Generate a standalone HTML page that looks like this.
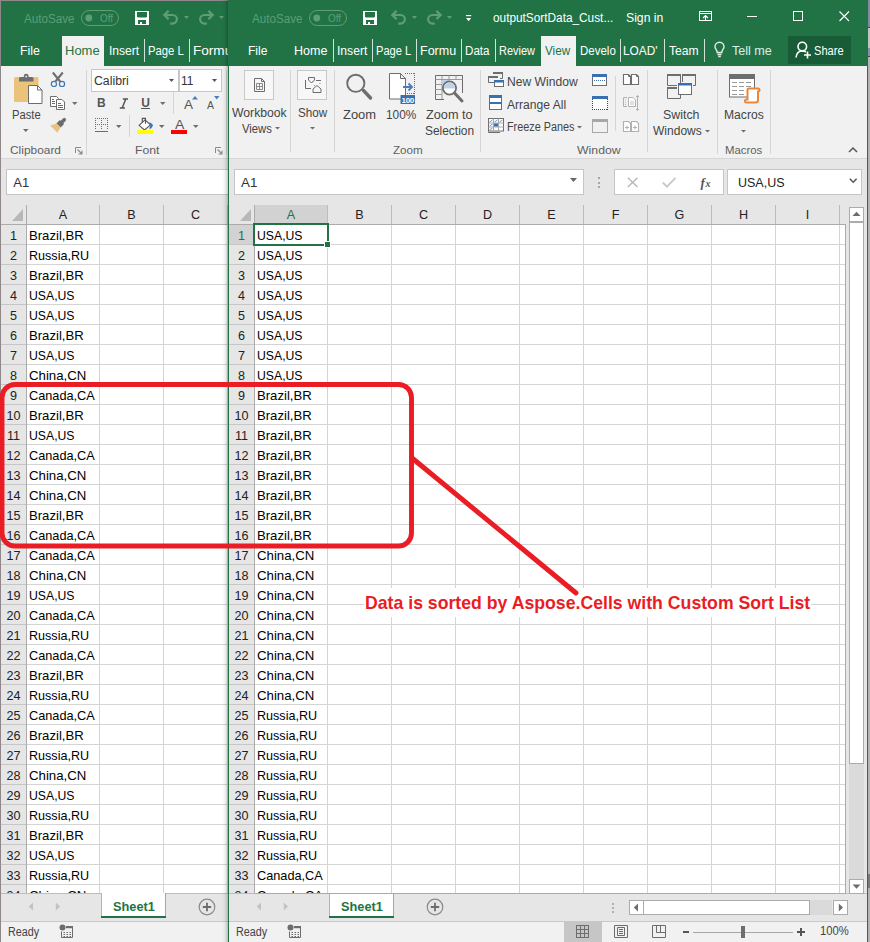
<!DOCTYPE html>
<html><head><meta charset="utf-8"><style>
html,body{margin:0;padding:0;}
body{width:870px;height:942px;overflow:hidden;position:relative;background:#fff;font-family:"Liberation Sans",sans-serif;}
div{position:absolute;}
.t{line-height:1;white-space:nowrap;}
svg{position:absolute;overflow:visible;}
</style></head><body>
<div id="lw" style="left:0;top:0;width:228px;height:942px;overflow:hidden;background:#f1f1f1">
<div style="left:0px;top:0px;width:228px;height:66px;background:#217346;"></div>
<div style="left:62px;top:36px;width:42px;height:30px;background:#f1f1f1;"></div>
<div class="t" style="left:24.00px;top:12.00px;font-size:12px;color:#5f9d74;font-weight:normal;line-height:14px;transform:scaleX(0.9690);transform-origin:0 0;">AutoSave</div>
<div style="left:81px;top:10px;width:38px;height:16px;background:transparent;box-sizing:border-box;border:1.3px solid #5f9d74;border-radius:8px;"></div>
<svg style="left:85px;top:14px" width="8" height="8"><circle cx="3.8" cy="4" r="3.4" fill="#5f9d74"/></svg>
<div class="t" style="left:99.57px;top:12.00px;font-size:11.5px;color:#5f9d74;font-weight:normal;line-height:12px;transform:scaleX(0.8562);transform-origin:0 0;">Off</div>
<svg style="left:135px;top:11px" width="14" height="14"><rect x="0" y="0" width="14" height="14" fill="#fff"/><path d="M2 1 H12 V5.8 L11 6.6 H3 L2 5.8 Z" fill="#217346"/><rect x="3" y="9" width="8" height="4" fill="#217346"/><rect x="5" y="11" width="2" height="2" fill="#fff"/></svg>
<svg style="left:163px;top:10px" width="16" height="16"><path d="M5.6 0.9 L1.3 5 L5.6 9.1 M1.3 5 H9.6 A4.3 4.3 0 0 1 9.6 13.6 H7.2" fill="none" stroke="#5f9d74" stroke-width="2.2"/></svg>
<svg style="left:184px;top:16px" width="6" height="4"><path d="M0 0 H5 L2.5 3 Z" fill="#5f9d74"/></svg>
<svg style="left:198px;top:10px" width="16" height="16"><g transform="translate(16,0) scale(-1,1)"><path d="M5.6 0.9 L1.3 5 L5.6 9.1 M1.3 5 H9.6 A4.3 4.3 0 0 1 9.6 13.6 H7.2" fill="none" stroke="#5f9d74" stroke-width="2.2"/></g></svg>
<svg style="left:219px;top:16px" width="6" height="4"><path d="M0 0 H5 L2.5 3 Z" fill="#5f9d74"/></svg>
<div class="t" style="left:19.97px;top:44.00px;font-size:12px;color:#fff;font-weight:normal;line-height:14px;transform:scaleX(1.0335);transform-origin:0 0;">File</div>
<div class="t" style="left:64.92px;top:44.00px;font-size:12px;color:#217346;font-weight:normal;line-height:14px;transform:scaleX(1.0820);transform-origin:0 0;">Home</div>
<div class="t" style="left:108.59px;top:44.00px;font-size:12px;color:#fff;font-weight:normal;line-height:14px;transform:scaleX(1.0069);transform-origin:0 0;">Insert</div>
<div style="left:144px;top:39px;width:1px;height:23px;background:rgba(255,255,255,0.8);"></div>
<div class="t" style="left:148.06px;top:44.00px;font-size:12px;color:#fff;font-weight:normal;line-height:14px;transform:scaleX(0.9401);transform-origin:0 0;">Page L</div>
<div style="left:189px;top:39px;width:1px;height:23px;background:rgba(255,255,255,0.8);"></div>
<div class="t" style="left:192.87px;top:44.00px;font-size:12px;color:#fff;font-weight:normal;line-height:14px;transform:scaleX(1.1317);transform-origin:0 0;">Formulas</div>
<div style="left:0px;top:66px;width:228px;height:92px;background:#f1f1f1;"></div>
<div style="left:0px;top:158px;width:228px;height:1px;background:#d6d6d6;"></div>
<svg style="left:13px;top:73px" width="32" height="32"><rect x="1" y="4" width="24.5" height="25" rx="1.5" fill="#ebc27a"/><path d="M6 8.5 V5.5 Q6 4 7.5 4 H10.8 V3.2 A2.4 2.4 0 0 1 15.6 3.2 V4 H19 Q20.5 4 20.5 5.5 V8.5 Z" fill="#6d6d6d"/><circle cx="13.2" cy="3.6" r="0.9" fill="#f1f1f1"/><path d="M15.5 12.5 H24.5 L29 17 V30.5 H15.5 Z" fill="#fff" stroke="#6d6d6d" stroke-width="1"/><path d="M24.5 12.5 V17 H29" fill="none" stroke="#6d6d6d" stroke-width="1"/></svg>
<div class="t" style="left:11.87px;top:108.00px;font-size:12px;color:#444;font-weight:normal;line-height:14px;transform:scaleX(0.9349);transform-origin:0 0;">Paste</div>
<svg style="left:23px;top:129px" width="6.5" height="4"><path d="M0 0 H5.5 L2.75 3 Z" fill="#6d6d6d"/></svg>
<svg style="left:50px;top:72px" width="16" height="16"><path d="M2.8 0.5 L10.2 9.5 M12.8 0.5 L5.4 9.5" stroke="#6d6d6d" stroke-width="2" fill="none"/><circle cx="3.9" cy="11.9" r="2.6" fill="#f1f1f1" stroke="#3f77bb" stroke-width="1.2"/><circle cx="12" cy="11.9" r="2.6" fill="#f1f1f1" stroke="#3f77bb" stroke-width="1.2"/></svg>
<svg style="left:50px;top:96px" width="16" height="15"><path d="M0.5 0.5 H6.5 L8.5 2.5 V10.5 H0.5 Z" fill="#fff" stroke="#6d6d6d" stroke-width="1"/><path d="M2 3.5 H4 M2 5.5 H5 M2 7.5 H5" stroke="#3f77bb" stroke-width="1"/><path d="M6.5 3.5 H12 L14.5 6 V13.5 H6.5 Z" fill="#fff" stroke="#6d6d6d" stroke-width="1"/><path d="M8 7.5 H11 M8 9.5 H13 M8 11.5 H13" stroke="#3f77bb" stroke-width="1"/></svg>
<svg style="left:72px;top:102px" width="6.5" height="4"><path d="M0 0 H5.5 L2.75 3 Z" fill="#6d6d6d"/></svg>
<svg style="left:50px;top:118px" width="17" height="16"><path d="M14.3 1.7 L12 4" stroke="#6d6d6d" stroke-width="3.6" stroke-linecap="round"/><path d="M9.9 1.9 L14.1 6.1 L10.6 9.6 L6.4 5.4 Z" fill="#6d6d6d"/><path d="M6.4 5.4 L10.6 9.6 L7.4 14.7 L0.2 7.6 Z" fill="#ebc27a"/></svg>
<div class="t" style="left:10.18px;top:144.00px;font-size:11.5px;color:#5f5f5f;font-weight:normal;line-height:12px;transform:scaleX(1.0355);transform-origin:0 0;">Clipboard</div>
<svg style="left:75px;top:147px" width="8" height="8"><path d="M0.5 6 V0.5 H6" fill="none" stroke="#8a8a8a" stroke-width="1"/><path d="M2.5 2.5 L6.5 6.5 M7 3.5 V7 H3.5" fill="none" stroke="#8a8a8a" stroke-width="1.1"/></svg>
<div style="left:86px;top:70px;width:1px;height:85px;background:#d5d5d5;"></div>
<div style="left:91px;top:69px;width:88px;height:23px;background:#fff;box-sizing:border-box;border:1px solid #c6c6c6;"></div>
<div class="t" style="left:93.91px;top:74.00px;font-size:12.5px;color:#333;font-weight:normal;line-height:14px;transform:scaleX(0.9823);transform-origin:0 0;">Calibri</div>
<svg style="left:169px;top:79px" width="6" height="4"><path d="M0 0 H5 L2.5 3 Z" fill="#555"/></svg>
<div style="left:179px;top:69px;width:43px;height:23px;background:#fff;box-sizing:border-box;border:1px solid #c6c6c6;"></div>
<div class="t" style="left:180.84px;top:74.00px;font-size:12.5px;color:#333;font-weight:normal;line-height:14px;transform:scaleX(0.9565);transform-origin:0 0;">11</div>
<svg style="left:212px;top:79px" width="6" height="4"><path d="M0 0 H5 L2.5 3 Z" fill="#555"/></svg>
<div class="t" style="left:97.00px;top:96.00px;font-size:12px;color:#555;font-weight:bold;line-height:14px;">B</div>
<svg style="left:119px;top:97.6px" width="10" height="11"><path d="M3.8 1 H9 M0.8 10 H6 M6.8 1 L3.2 10" fill="none" stroke="#555" stroke-width="1.5"/></svg>
<div class="t" style="left:141.30px;top:96.00px;font-size:12px;color:#555;font-weight:bold;line-height:14px;">U</div>
<div style="left:141px;top:108px;width:9px;height:1.2px;background:#555;"></div>
<svg style="left:159.6px;top:102px" width="6.5" height="4"><path d="M0 0 H5.5 L2.75 3 Z" fill="#6d6d6d"/></svg>
<div style="left:173px;top:92px;width:1px;height:22px;background:#d5d5d5;"></div>
<div class="t" style="left:184.00px;top:97.00px;font-size:13.5px;color:#555;font-weight:normal;line-height:15px;">A</div>
<svg style="left:191.5px;top:95.5px" width="7" height="4"><path d="M0 3.5 H6 L3 0 Z" fill="#4a7ebb"/></svg>
<div class="t" style="left:207.00px;top:99.00px;font-size:10.5px;color:#555;font-weight:normal;line-height:12px;">A</div>
<svg style="left:214px;top:95.8px" width="6" height="4"><path d="M0 0 H5.5 L2.75 3.5 Z" fill="#4a7ebb"/></svg>
<svg style="left:95px;top:118px" width="14" height="15"><path d="M0 0.5 H13 M0 6.5 H13 M0.5 0 V12 M6.5 0 V12 M12.5 0 V12" stroke="#6d6d6d" stroke-width="1" stroke-dasharray="1 1" fill="none"/><path d="M0 13.5 H13" stroke="#6d6d6d" stroke-width="1"/></svg>
<svg style="left:115.7px;top:125px" width="6.5" height="4"><path d="M0 0 H5.5 L2.75 3 Z" fill="#6d6d6d"/></svg>
<div style="left:129px;top:115px;width:1px;height:22px;background:#d5d5d5;"></div>
<svg style="left:137px;top:117px" width="17" height="18"><path d="M2.1 8.3 L8 2.9 L13.6 7.8 L7.5 13 Z" fill="#fff" stroke="#555" stroke-width="1.1"/><path d="M5.3 5.5 V1.4 H8.5 V6.7" fill="none" stroke="#555" stroke-width="1.1"/><path d="M12 5.5 Q16.5 6.5 15.8 9 Q15 11 12.5 12.5 Q13.5 9 12 5.5 Z" fill="#3f77bb"/><rect x="0" y="13" width="16" height="4" fill="#ffff00"/></svg>
<svg style="left:158.8px;top:125px" width="6.5" height="4"><path d="M0 0 H5.5 L2.75 3 Z" fill="#6d6d6d"/></svg>
<div class="t" style="left:175.00px;top:118.00px;font-size:12.5px;color:#555;font-weight:normal;line-height:14px;transform:scaleX(1.1205);transform-origin:0 0;">A</div>
<div style="left:171px;top:130px;width:16px;height:4px;background:#ff0000;"></div>
<svg style="left:192.6px;top:125px" width="6.5" height="4"><path d="M0 0 H5.5 L2.75 3 Z" fill="#6d6d6d"/></svg>
<div class="t" style="left:135.34px;top:144.00px;font-size:11.5px;color:#5f5f5f;font-weight:normal;line-height:12px;transform:scaleX(1.0636);transform-origin:0 0;">Font</div>
<svg style="left:215px;top:147px" width="8" height="8"><path d="M0.5 6 V0.5 H6" fill="none" stroke="#8a8a8a" stroke-width="1"/><path d="M2.5 2.5 L6.5 6.5 M7 3.5 V7 H3.5" fill="none" stroke="#8a8a8a" stroke-width="1.1"/></svg>
<div style="left:226px;top:70px;width:1px;height:85px;background:#d5d5d5;"></div>
<div style="left:0px;top:159px;width:228px;height:66px;background:#e6e6e6;"></div>
<div style="left:6px;top:169px;width:230px;height:26px;background:#fff;box-sizing:border-box;border:1px solid #c6c6c6;"></div>
<div class="t" style="left:13.30px;top:175.00px;font-size:13px;color:#333;font-weight:normal;line-height:15px;transform:scaleX(1.0000);transform-origin:0 0;">A1</div>
<div style="left:1px;top:205px;width:228px;height:19px;background:#e6e6e6;"></div>
<svg style="left:12px;top:209px" width="12" height="12"><path d="M11 0 L11 12 L0 12 Z" fill="#b8b8b8"/></svg>
<div style="left:1px;top:225px;width:25px;height:668px;background:#e6e6e6;"></div>
<div style="left:27px;top:225px;width:213px;height:668px;background:#fff;"></div>
<div style="left:1px;top:224px;width:239px;height:1px;background:#ababab;"></div>
<div style="left:26px;top:205px;width:1px;height:688px;background:#ababab;"></div>
<div style="left:1px;top:244px;width:25px;height:1px;background:#c6c6c6;"></div>
<div style="left:27px;top:244px;width:213px;height:1px;background:#d4d4d4;"></div>
<div class="t" style="left:-1.50px;top:229.00px;font-size:12.6px;color:#222;font-weight:normal;line-height:14px;width:30px;text-align:center;">1</div>
<div class="t" style="left:28.69px;top:228.00px;font-size:13px;color:#000;font-weight:normal;line-height:15px;transform:scaleX(1.0095);transform-origin:0 0;">Brazil,BR</div>
<div style="left:1px;top:264px;width:25px;height:1px;background:#c6c6c6;"></div>
<div style="left:27px;top:264px;width:213px;height:1px;background:#d4d4d4;"></div>
<div class="t" style="left:-1.50px;top:249.00px;font-size:12.6px;color:#222;font-weight:normal;line-height:14px;width:30px;text-align:center;">2</div>
<div class="t" style="left:28.74px;top:248.00px;font-size:13px;color:#000;font-weight:normal;line-height:15px;transform:scaleX(0.9667);transform-origin:0 0;">Russia,RU</div>
<div style="left:1px;top:284px;width:25px;height:1px;background:#c6c6c6;"></div>
<div style="left:27px;top:284px;width:213px;height:1px;background:#d4d4d4;"></div>
<div class="t" style="left:-1.50px;top:269.00px;font-size:12.6px;color:#222;font-weight:normal;line-height:14px;width:30px;text-align:center;">3</div>
<div class="t" style="left:28.69px;top:268.00px;font-size:13px;color:#000;font-weight:normal;line-height:15px;transform:scaleX(1.0095);transform-origin:0 0;">Brazil,BR</div>
<div style="left:1px;top:304px;width:25px;height:1px;background:#c6c6c6;"></div>
<div style="left:27px;top:304px;width:213px;height:1px;background:#d4d4d4;"></div>
<div class="t" style="left:-1.50px;top:289.00px;font-size:12.6px;color:#222;font-weight:normal;line-height:14px;width:30px;text-align:center;">4</div>
<div class="t" style="left:28.86px;top:288.00px;font-size:13px;color:#000;font-weight:normal;line-height:15px;transform:scaleX(0.9402);transform-origin:0 0;">USA,US</div>
<div style="left:1px;top:324px;width:25px;height:1px;background:#c6c6c6;"></div>
<div style="left:27px;top:324px;width:213px;height:1px;background:#d4d4d4;"></div>
<div class="t" style="left:-1.50px;top:309.00px;font-size:12.6px;color:#222;font-weight:normal;line-height:14px;width:30px;text-align:center;">5</div>
<div class="t" style="left:28.86px;top:308.00px;font-size:13px;color:#000;font-weight:normal;line-height:15px;transform:scaleX(0.9402);transform-origin:0 0;">USA,US</div>
<div style="left:1px;top:344px;width:25px;height:1px;background:#c6c6c6;"></div>
<div style="left:27px;top:344px;width:213px;height:1px;background:#d4d4d4;"></div>
<div class="t" style="left:-1.50px;top:329.00px;font-size:12.6px;color:#222;font-weight:normal;line-height:14px;width:30px;text-align:center;">6</div>
<div class="t" style="left:28.69px;top:328.00px;font-size:13px;color:#000;font-weight:normal;line-height:15px;transform:scaleX(1.0095);transform-origin:0 0;">Brazil,BR</div>
<div style="left:1px;top:364px;width:25px;height:1px;background:#c6c6c6;"></div>
<div style="left:27px;top:364px;width:213px;height:1px;background:#d4d4d4;"></div>
<div class="t" style="left:-1.50px;top:349.00px;font-size:12.6px;color:#222;font-weight:normal;line-height:14px;width:30px;text-align:center;">7</div>
<div class="t" style="left:28.86px;top:348.00px;font-size:13px;color:#000;font-weight:normal;line-height:15px;transform:scaleX(0.9402);transform-origin:0 0;">USA,US</div>
<div style="left:1px;top:384px;width:25px;height:1px;background:#c6c6c6;"></div>
<div style="left:27px;top:384px;width:213px;height:1px;background:#d4d4d4;"></div>
<div class="t" style="left:-1.50px;top:369.00px;font-size:12.6px;color:#222;font-weight:normal;line-height:14px;width:30px;text-align:center;">8</div>
<div class="t" style="left:29.09px;top:368.00px;font-size:13px;color:#000;font-weight:normal;line-height:15px;transform:scaleX(1.0183);transform-origin:0 0;">China,CN</div>
<div style="left:1px;top:404px;width:25px;height:1px;background:#c6c6c6;"></div>
<div style="left:27px;top:404px;width:213px;height:1px;background:#d4d4d4;"></div>
<div class="t" style="left:-1.50px;top:389.00px;font-size:12.6px;color:#222;font-weight:normal;line-height:14px;width:30px;text-align:center;">9</div>
<div class="t" style="left:29.11px;top:388.00px;font-size:13px;color:#000;font-weight:normal;line-height:15px;transform:scaleX(0.9789);transform-origin:0 0;">Canada,CA</div>
<div style="left:1px;top:424px;width:25px;height:1px;background:#c6c6c6;"></div>
<div style="left:27px;top:424px;width:213px;height:1px;background:#d4d4d4;"></div>
<div class="t" style="left:-1.50px;top:409.00px;font-size:12.6px;color:#222;font-weight:normal;line-height:14px;width:30px;text-align:center;">10</div>
<div class="t" style="left:28.69px;top:408.00px;font-size:13px;color:#000;font-weight:normal;line-height:15px;transform:scaleX(1.0095);transform-origin:0 0;">Brazil,BR</div>
<div style="left:1px;top:444px;width:25px;height:1px;background:#c6c6c6;"></div>
<div style="left:27px;top:444px;width:213px;height:1px;background:#d4d4d4;"></div>
<div class="t" style="left:-1.50px;top:429.00px;font-size:12.6px;color:#222;font-weight:normal;line-height:14px;width:30px;text-align:center;">11</div>
<div class="t" style="left:28.86px;top:428.00px;font-size:13px;color:#000;font-weight:normal;line-height:15px;transform:scaleX(0.9402);transform-origin:0 0;">USA,US</div>
<div style="left:1px;top:464px;width:25px;height:1px;background:#c6c6c6;"></div>
<div style="left:27px;top:464px;width:213px;height:1px;background:#d4d4d4;"></div>
<div class="t" style="left:-1.50px;top:449.00px;font-size:12.6px;color:#222;font-weight:normal;line-height:14px;width:30px;text-align:center;">12</div>
<div class="t" style="left:29.11px;top:448.00px;font-size:13px;color:#000;font-weight:normal;line-height:15px;transform:scaleX(0.9789);transform-origin:0 0;">Canada,CA</div>
<div style="left:1px;top:484px;width:25px;height:1px;background:#c6c6c6;"></div>
<div style="left:27px;top:484px;width:213px;height:1px;background:#d4d4d4;"></div>
<div class="t" style="left:-1.50px;top:469.00px;font-size:12.6px;color:#222;font-weight:normal;line-height:14px;width:30px;text-align:center;">13</div>
<div class="t" style="left:29.09px;top:468.00px;font-size:13px;color:#000;font-weight:normal;line-height:15px;transform:scaleX(1.0183);transform-origin:0 0;">China,CN</div>
<div style="left:1px;top:504px;width:25px;height:1px;background:#c6c6c6;"></div>
<div style="left:27px;top:504px;width:213px;height:1px;background:#d4d4d4;"></div>
<div class="t" style="left:-1.50px;top:489.00px;font-size:12.6px;color:#222;font-weight:normal;line-height:14px;width:30px;text-align:center;">14</div>
<div class="t" style="left:29.09px;top:488.00px;font-size:13px;color:#000;font-weight:normal;line-height:15px;transform:scaleX(1.0183);transform-origin:0 0;">China,CN</div>
<div style="left:1px;top:524px;width:25px;height:1px;background:#c6c6c6;"></div>
<div style="left:27px;top:524px;width:213px;height:1px;background:#d4d4d4;"></div>
<div class="t" style="left:-1.50px;top:509.00px;font-size:12.6px;color:#222;font-weight:normal;line-height:14px;width:30px;text-align:center;">15</div>
<div class="t" style="left:28.69px;top:508.00px;font-size:13px;color:#000;font-weight:normal;line-height:15px;transform:scaleX(1.0095);transform-origin:0 0;">Brazil,BR</div>
<div style="left:1px;top:544px;width:25px;height:1px;background:#c6c6c6;"></div>
<div style="left:27px;top:544px;width:213px;height:1px;background:#d4d4d4;"></div>
<div class="t" style="left:-1.50px;top:529.00px;font-size:12.6px;color:#222;font-weight:normal;line-height:14px;width:30px;text-align:center;">16</div>
<div class="t" style="left:29.11px;top:528.00px;font-size:13px;color:#000;font-weight:normal;line-height:15px;transform:scaleX(0.9789);transform-origin:0 0;">Canada,CA</div>
<div style="left:1px;top:564px;width:25px;height:1px;background:#c6c6c6;"></div>
<div style="left:27px;top:564px;width:213px;height:1px;background:#d4d4d4;"></div>
<div class="t" style="left:-1.50px;top:549.00px;font-size:12.6px;color:#222;font-weight:normal;line-height:14px;width:30px;text-align:center;">17</div>
<div class="t" style="left:29.11px;top:548.00px;font-size:13px;color:#000;font-weight:normal;line-height:15px;transform:scaleX(0.9789);transform-origin:0 0;">Canada,CA</div>
<div style="left:1px;top:584px;width:25px;height:1px;background:#c6c6c6;"></div>
<div style="left:27px;top:584px;width:213px;height:1px;background:#d4d4d4;"></div>
<div class="t" style="left:-1.50px;top:569.00px;font-size:12.6px;color:#222;font-weight:normal;line-height:14px;width:30px;text-align:center;">18</div>
<div class="t" style="left:29.09px;top:568.00px;font-size:13px;color:#000;font-weight:normal;line-height:15px;transform:scaleX(1.0183);transform-origin:0 0;">China,CN</div>
<div style="left:1px;top:604px;width:25px;height:1px;background:#c6c6c6;"></div>
<div style="left:27px;top:604px;width:213px;height:1px;background:#d4d4d4;"></div>
<div class="t" style="left:-1.50px;top:589.00px;font-size:12.6px;color:#222;font-weight:normal;line-height:14px;width:30px;text-align:center;">19</div>
<div class="t" style="left:28.86px;top:588.00px;font-size:13px;color:#000;font-weight:normal;line-height:15px;transform:scaleX(0.9402);transform-origin:0 0;">USA,US</div>
<div style="left:1px;top:624px;width:25px;height:1px;background:#c6c6c6;"></div>
<div style="left:27px;top:624px;width:213px;height:1px;background:#d4d4d4;"></div>
<div class="t" style="left:-1.50px;top:609.00px;font-size:12.6px;color:#222;font-weight:normal;line-height:14px;width:30px;text-align:center;">20</div>
<div class="t" style="left:29.11px;top:608.00px;font-size:13px;color:#000;font-weight:normal;line-height:15px;transform:scaleX(0.9789);transform-origin:0 0;">Canada,CA</div>
<div style="left:1px;top:644px;width:25px;height:1px;background:#c6c6c6;"></div>
<div style="left:27px;top:644px;width:213px;height:1px;background:#d4d4d4;"></div>
<div class="t" style="left:-1.50px;top:629.00px;font-size:12.6px;color:#222;font-weight:normal;line-height:14px;width:30px;text-align:center;">21</div>
<div class="t" style="left:28.74px;top:628.00px;font-size:13px;color:#000;font-weight:normal;line-height:15px;transform:scaleX(0.9667);transform-origin:0 0;">Russia,RU</div>
<div style="left:1px;top:664px;width:25px;height:1px;background:#c6c6c6;"></div>
<div style="left:27px;top:664px;width:213px;height:1px;background:#d4d4d4;"></div>
<div class="t" style="left:-1.50px;top:649.00px;font-size:12.6px;color:#222;font-weight:normal;line-height:14px;width:30px;text-align:center;">22</div>
<div class="t" style="left:29.11px;top:648.00px;font-size:13px;color:#000;font-weight:normal;line-height:15px;transform:scaleX(0.9789);transform-origin:0 0;">Canada,CA</div>
<div style="left:1px;top:684px;width:25px;height:1px;background:#c6c6c6;"></div>
<div style="left:27px;top:684px;width:213px;height:1px;background:#d4d4d4;"></div>
<div class="t" style="left:-1.50px;top:669.00px;font-size:12.6px;color:#222;font-weight:normal;line-height:14px;width:30px;text-align:center;">23</div>
<div class="t" style="left:28.69px;top:668.00px;font-size:13px;color:#000;font-weight:normal;line-height:15px;transform:scaleX(1.0095);transform-origin:0 0;">Brazil,BR</div>
<div style="left:1px;top:704px;width:25px;height:1px;background:#c6c6c6;"></div>
<div style="left:27px;top:704px;width:213px;height:1px;background:#d4d4d4;"></div>
<div class="t" style="left:-1.50px;top:689.00px;font-size:12.6px;color:#222;font-weight:normal;line-height:14px;width:30px;text-align:center;">24</div>
<div class="t" style="left:28.74px;top:688.00px;font-size:13px;color:#000;font-weight:normal;line-height:15px;transform:scaleX(0.9667);transform-origin:0 0;">Russia,RU</div>
<div style="left:1px;top:724px;width:25px;height:1px;background:#c6c6c6;"></div>
<div style="left:27px;top:724px;width:213px;height:1px;background:#d4d4d4;"></div>
<div class="t" style="left:-1.50px;top:709.00px;font-size:12.6px;color:#222;font-weight:normal;line-height:14px;width:30px;text-align:center;">25</div>
<div class="t" style="left:29.11px;top:708.00px;font-size:13px;color:#000;font-weight:normal;line-height:15px;transform:scaleX(0.9789);transform-origin:0 0;">Canada,CA</div>
<div style="left:1px;top:744px;width:25px;height:1px;background:#c6c6c6;"></div>
<div style="left:27px;top:744px;width:213px;height:1px;background:#d4d4d4;"></div>
<div class="t" style="left:-1.50px;top:729.00px;font-size:12.6px;color:#222;font-weight:normal;line-height:14px;width:30px;text-align:center;">26</div>
<div class="t" style="left:28.69px;top:728.00px;font-size:13px;color:#000;font-weight:normal;line-height:15px;transform:scaleX(1.0095);transform-origin:0 0;">Brazil,BR</div>
<div style="left:1px;top:764px;width:25px;height:1px;background:#c6c6c6;"></div>
<div style="left:27px;top:764px;width:213px;height:1px;background:#d4d4d4;"></div>
<div class="t" style="left:-1.50px;top:749.00px;font-size:12.6px;color:#222;font-weight:normal;line-height:14px;width:30px;text-align:center;">27</div>
<div class="t" style="left:28.74px;top:748.00px;font-size:13px;color:#000;font-weight:normal;line-height:15px;transform:scaleX(0.9667);transform-origin:0 0;">Russia,RU</div>
<div style="left:1px;top:784px;width:25px;height:1px;background:#c6c6c6;"></div>
<div style="left:27px;top:784px;width:213px;height:1px;background:#d4d4d4;"></div>
<div class="t" style="left:-1.50px;top:769.00px;font-size:12.6px;color:#222;font-weight:normal;line-height:14px;width:30px;text-align:center;">28</div>
<div class="t" style="left:29.09px;top:768.00px;font-size:13px;color:#000;font-weight:normal;line-height:15px;transform:scaleX(1.0183);transform-origin:0 0;">China,CN</div>
<div style="left:1px;top:804px;width:25px;height:1px;background:#c6c6c6;"></div>
<div style="left:27px;top:804px;width:213px;height:1px;background:#d4d4d4;"></div>
<div class="t" style="left:-1.50px;top:789.00px;font-size:12.6px;color:#222;font-weight:normal;line-height:14px;width:30px;text-align:center;">29</div>
<div class="t" style="left:28.86px;top:788.00px;font-size:13px;color:#000;font-weight:normal;line-height:15px;transform:scaleX(0.9402);transform-origin:0 0;">USA,US</div>
<div style="left:1px;top:824px;width:25px;height:1px;background:#c6c6c6;"></div>
<div style="left:27px;top:824px;width:213px;height:1px;background:#d4d4d4;"></div>
<div class="t" style="left:-1.50px;top:809.00px;font-size:12.6px;color:#222;font-weight:normal;line-height:14px;width:30px;text-align:center;">30</div>
<div class="t" style="left:28.74px;top:808.00px;font-size:13px;color:#000;font-weight:normal;line-height:15px;transform:scaleX(0.9667);transform-origin:0 0;">Russia,RU</div>
<div style="left:1px;top:844px;width:25px;height:1px;background:#c6c6c6;"></div>
<div style="left:27px;top:844px;width:213px;height:1px;background:#d4d4d4;"></div>
<div class="t" style="left:-1.50px;top:829.00px;font-size:12.6px;color:#222;font-weight:normal;line-height:14px;width:30px;text-align:center;">31</div>
<div class="t" style="left:28.69px;top:828.00px;font-size:13px;color:#000;font-weight:normal;line-height:15px;transform:scaleX(1.0095);transform-origin:0 0;">Brazil,BR</div>
<div style="left:1px;top:864px;width:25px;height:1px;background:#c6c6c6;"></div>
<div style="left:27px;top:864px;width:213px;height:1px;background:#d4d4d4;"></div>
<div class="t" style="left:-1.50px;top:849.00px;font-size:12.6px;color:#222;font-weight:normal;line-height:14px;width:30px;text-align:center;">32</div>
<div class="t" style="left:28.86px;top:848.00px;font-size:13px;color:#000;font-weight:normal;line-height:15px;transform:scaleX(0.9402);transform-origin:0 0;">USA,US</div>
<div style="left:1px;top:884px;width:25px;height:1px;background:#c6c6c6;"></div>
<div style="left:27px;top:884px;width:213px;height:1px;background:#d4d4d4;"></div>
<div class="t" style="left:-1.50px;top:869.00px;font-size:12.6px;color:#222;font-weight:normal;line-height:14px;width:30px;text-align:center;">33</div>
<div class="t" style="left:28.74px;top:868.00px;font-size:13px;color:#000;font-weight:normal;line-height:15px;transform:scaleX(0.9667);transform-origin:0 0;">Russia,RU</div>
<div class="t" style="left:-1.50px;top:889.00px;font-size:12.6px;color:#222;font-weight:normal;line-height:14px;width:30px;text-align:center;">34</div>
<div class="t" style="left:29.09px;top:888.00px;font-size:13px;color:#000;font-weight:normal;line-height:15px;transform:scaleX(1.0183);transform-origin:0 0;">China,CN</div>
<div style="left:99px;top:205px;width:1px;height:19px;background:#bcbcbc;"></div>
<div style="left:99px;top:225px;width:1px;height:668px;background:#d4d4d4;"></div>
<div class="t" style="left:43.00px;top:208.00px;font-size:12.6px;color:#222;font-weight:normal;line-height:14px;width:40px;text-align:center;">A</div>
<div style="left:163px;top:205px;width:1px;height:19px;background:#bcbcbc;"></div>
<div style="left:163px;top:225px;width:1px;height:668px;background:#d4d4d4;"></div>
<div class="t" style="left:111.50px;top:208.00px;font-size:12.6px;color:#222;font-weight:normal;line-height:14px;width:40px;text-align:center;">B</div>
<div style="left:227px;top:205px;width:1px;height:19px;background:#bcbcbc;"></div>
<div style="left:227px;top:225px;width:1px;height:668px;background:#d4d4d4;"></div>
<div class="t" style="left:175.50px;top:208.00px;font-size:12.6px;color:#222;font-weight:normal;line-height:14px;width:40px;text-align:center;">C</div>
<div style="left:0px;top:893px;width:700px;height:28px;background:#e6e6e6;"></div>
<div style="left:0px;top:893px;width:700px;height:1px;background:#bdbdbd;"></div>
<div style="left:0px;top:921px;width:700px;height:1px;background:#c8c8c8;"></div>
<div style="left:0px;top:922px;width:700px;height:20px;background:#f1f1f1;"></div>
<svg style="left:28px;top:902px" width="6" height="9"><path d="M5 0.5 V8.5 L0.8 4.5 Z" fill="#c2c2c2"/></svg>
<svg style="left:55px;top:902px" width="6" height="9"><path d="M0.8 0.5 V8.5 L5 4.5 Z" fill="#c2c2c2"/></svg>
<div style="left:101px;top:893px;width:65px;height:25px;background:#fff;box-sizing:border-box;border-left:1px solid #b4b4b4;border-right:1px solid #a6a6a6;"></div>
<div style="left:101px;top:916px;width:65px;height:2px;background:#217346;"></div>
<div class="t" style="left:112.59px;top:900.00px;font-size:12.5px;color:#217346;font-weight:bold;line-height:14px;transform:scaleX(1.0199);transform-origin:0 0;">Sheet1</div>
<svg style="left:198px;top:898px" width="18" height="18"><circle cx="9" cy="9" r="7.8" fill="none" stroke="#8a8a8a" stroke-width="1.2"/><path d="M9 4.8 V13.2 M4.8 9 H13.2" stroke="#6d6d6d" stroke-width="1.8"/></svg>
<div class="t" style="left:7.60px;top:925.00px;font-size:12px;color:#444;font-weight:normal;line-height:14px;transform:scaleX(0.8991);transform-origin:0 0;">Ready</div>
<svg style="left:59px;top:924px" width="15" height="15"><circle cx="3.5" cy="3.5" r="3" fill="#6d6d6d"/><path d="M7 2.5 H13.5 V13.5 H2.5 V7.5" fill="none" stroke="#6d6d6d" stroke-width="1"/><rect x="7" y="2" width="7" height="2.2" fill="#6d6d6d"/><path d="M4.5 8.5 H6 M7.5 8.5 H9 M10.5 8.5 H12 M4.5 10.5 H6 M7.5 10.5 H9 M10.5 10.5 H12 M4.5 12.5 H6 M7.5 12.5 H9 M10.5 12.5 H12" stroke="#6d6d6d" stroke-width="1"/></svg>
<div style="left:0px;top:0px;width:1px;height:942px;background:#8f878a;"></div>
<div style="left:0px;top:0px;width:228px;height:1px;background:#8f878a;"></div>
</div>
<div style="left:222px;top:0;width:6px;height:942px;background:linear-gradient(to right,rgba(0,0,0,0),rgba(0,0,0,0.05) 50%,rgba(0,0,0,0.22));"></div>
<div id="rw" style="left:228px;top:0;width:642px;height:942px;overflow:hidden;background:#f1f1f1">
<div style="left:0px;top:0px;width:642px;height:66px;background:#217346;"></div>
<div style="left:313px;top:36px;width:35px;height:30px;background:#f1f1f1;"></div>
<div class="t" style="left:24.00px;top:12.00px;font-size:12px;color:#5f9d74;font-weight:normal;line-height:14px;transform:scaleX(0.9690);transform-origin:0 0;">AutoSave</div>
<div style="left:81px;top:10px;width:38px;height:16px;background:transparent;box-sizing:border-box;border:1.3px solid #5f9d74;border-radius:8px;"></div>
<svg style="left:85px;top:14px" width="8" height="8"><circle cx="3.8" cy="4" r="3.4" fill="#5f9d74"/></svg>
<div class="t" style="left:99.57px;top:12.00px;font-size:11.5px;color:#5f9d74;font-weight:normal;line-height:12px;transform:scaleX(0.8562);transform-origin:0 0;">Off</div>
<svg style="left:135px;top:11px" width="14" height="14"><rect x="0" y="0" width="14" height="14" fill="#fff"/><path d="M2 1 H12 V5.8 L11 6.6 H3 L2 5.8 Z" fill="#217346"/><rect x="3" y="9" width="8" height="4" fill="#217346"/><rect x="5" y="11" width="2" height="2" fill="#fff"/></svg>
<svg style="left:163px;top:10px" width="16" height="16"><path d="M5.6 0.9 L1.3 5 L5.6 9.1 M1.3 5 H9.6 A4.3 4.3 0 0 1 9.6 13.6 H7.2" fill="none" stroke="#5f9d74" stroke-width="2.2"/></svg>
<svg style="left:184px;top:16px" width="6" height="4"><path d="M0 0 H5 L2.5 3 Z" fill="#5f9d74"/></svg>
<svg style="left:198px;top:10px" width="16" height="16"><g transform="translate(16,0) scale(-1,1)"><path d="M5.6 0.9 L1.3 5 L5.6 9.1 M1.3 5 H9.6 A4.3 4.3 0 0 1 9.6 13.6 H7.2" fill="none" stroke="#5f9d74" stroke-width="2.2"/></g></svg>
<svg style="left:219px;top:16px" width="6" height="4"><path d="M0 0 H5 L2.5 3 Z" fill="#5f9d74"/></svg>
<svg style="left:238px;top:15px" width="6" height="7"><rect x="0" y="0" width="5.2" height="1.2" fill="#fff"/><path d="M0 3 H5.2 L2.6 6.2 Z" fill="#fff"/></svg>
<div class="t" style="left:264.91px;top:11.00px;font-size:12px;color:#fff;font-weight:normal;line-height:14px;transform:scaleX(0.9850);transform-origin:0 0;">outputSortData_Cust...</div>
<div class="t" style="left:398.49px;top:11.00px;font-size:12px;color:#fff;font-weight:normal;line-height:14px;transform:scaleX(1.0169);transform-origin:0 0;">Sign in</div>
<svg style="left:471px;top:11px" width="14" height="11"><rect x="0.5" y="0.5" width="12" height="9" fill="none" stroke="#fff" stroke-width="1"/><rect x="0.5" y="2" width="12" height="1" fill="#fff"/><path d="M6.5 9.5 V4.5 M4 7 L6.5 4.5 L9 7" fill="none" stroke="#fff" stroke-width="1.1"/></svg>
<div style="left:519px;top:16px;width:10px;height:1px;background:#fff;"></div>
<div style="left:565px;top:11px;width:10px;height:10px;background:transparent;box-sizing:border-box;border:1px solid #fff;"></div>
<svg style="left:611px;top:11px" width="11" height="11"><path d="M0.5 0.5 L10 10 M10 0.5 L0.5 10" stroke="#fff" stroke-width="1.1"/></svg>
<div class="t" style="left:19.99px;top:44.00px;font-size:12px;color:#fff;font-weight:normal;line-height:14px;transform:scaleX(1.0056);transform-origin:0 0;">File</div>
<div class="t" style="left:65.96px;top:44.00px;font-size:12px;color:#fff;font-weight:normal;line-height:14px;transform:scaleX(1.0426);transform-origin:0 0;">Home</div>
<div style="left:105px;top:39px;width:1px;height:23px;background:rgba(255,255,255,0.8);"></div>
<div class="t" style="left:108.69px;top:44.00px;font-size:12px;color:#fff;font-weight:normal;line-height:14px;transform:scaleX(1.0104);transform-origin:0 0;">Insert</div>
<div style="left:144px;top:39px;width:1px;height:23px;background:rgba(255,255,255,0.8);"></div>
<div class="t" style="left:148.07px;top:44.00px;font-size:12px;color:#fff;font-weight:normal;line-height:14px;transform:scaleX(0.9264);transform-origin:0 0;">Page L</div>
<div style="left:188px;top:39px;width:1px;height:23px;background:rgba(255,255,255,0.8);"></div>
<div class="t" style="left:191.96px;top:44.00px;font-size:12px;color:#fff;font-weight:normal;line-height:14px;transform:scaleX(1.0426);transform-origin:0 0;">Formu</div>
<div style="left:233px;top:39px;width:1px;height:23px;background:rgba(255,255,255,0.8);"></div>
<div class="t" style="left:237.33px;top:44.00px;font-size:12px;color:#fff;font-weight:normal;line-height:14px;transform:scaleX(0.9672);transform-origin:0 0;">Data</div>
<div style="left:267px;top:39px;width:1px;height:23px;background:rgba(255,255,255,0.8);"></div>
<div class="t" style="left:271.09px;top:44.00px;font-size:12px;color:#fff;font-weight:normal;line-height:14px;transform:scaleX(0.9115);transform-origin:0 0;">Review</div>
<div class="t" style="left:316.70px;top:44.00px;font-size:12px;color:#217346;font-weight:normal;line-height:14px;transform:scaleX(0.9728);transform-origin:0 0;">View</div>
<div class="t" style="left:351.84px;top:44.00px;font-size:12px;color:#fff;font-weight:normal;line-height:14px;transform:scaleX(0.9582);transform-origin:0 0;">Develo</div>
<div style="left:392px;top:39px;width:1px;height:23px;background:rgba(255,255,255,0.8);"></div>
<div class="t" style="left:394.81px;top:44.00px;font-size:12px;color:#fff;font-weight:normal;line-height:14px;transform:scaleX(0.9880);transform-origin:0 0;">LOAD&#x27;</div>
<div style="left:436px;top:39px;width:1px;height:23px;background:rgba(255,255,255,0.8);"></div>
<div class="t" style="left:441.20px;top:44.00px;font-size:12px;color:#fff;font-weight:normal;line-height:14px;transform:scaleX(1.0106);transform-origin:0 0;">Team</div>
<div style="left:476px;top:39px;width:1px;height:23px;background:rgba(255,255,255,0.8);"></div>
<svg style="left:486px;top:42px" width="12" height="16"><path d="M3.2 10.5 C3.2 8 1 7 1 4.8 A4.5 4.5 0 0 1 10 4.8 C10 7 7.8 8 7.8 10.5 Z M3.5 12.5 H7.5 M4.2 14.5 H6.8" fill="none" stroke="#dfeee4" stroke-width="1.4"/></svg>
<div class="t" style="left:503.69px;top:44.00px;font-size:12px;color:#dfeee4;font-weight:normal;line-height:14px;transform:scaleX(1.0484);transform-origin:0 0;">Tell me</div>
<div style="left:560px;top:36px;width:63px;height:28px;background:#185c37;"></div>
<svg style="left:567px;top:41px" width="17" height="18"><circle cx="7.3" cy="5.6" r="4.3" fill="none" stroke="#fff" stroke-width="1.6"/><path d="M1 16.5 C1.5 12 4 10 7.3 10 C8.8 10 10 10.4 11 11" fill="none" stroke="#fff" stroke-width="1.6"/><path d="M12.5 10.5 V17.5 M9 14 H16" stroke="#fff" stroke-width="1.6"/></svg>
<div class="t" style="left:585.54px;top:44.00px;font-size:12px;color:#fff;font-weight:normal;line-height:14px;transform:scaleX(0.9226);transform-origin:0 0;">Share</div>
<div style="left:0px;top:66px;width:642px;height:92px;background:#f1f1f1;"></div>
<div style="left:0px;top:158px;width:642px;height:1px;background:#d6d6d6;"></div>
<div style="left:16px;top:70px;width:30px;height:30px;background:#f7f7f7;box-sizing:border-box;border:1px solid #c8c8c8;"></div>
<svg style="left:26px;top:78px" width="12" height="15"><path d="M0.5 0.5 H7.5 L10.5 3.5 V13.5 H0.5 Z M7.5 0.5 V3.5 H10.5" fill="none" stroke="#6d6d6d" stroke-width="1"/><path d="M2.5 5.5 H8.5 V11.5 H2.5 Z M5.5 5.5 V11.5 M2.5 8.5 H8.5" fill="none" stroke="#8a8a8a" stroke-width="1"/></svg>
<div class="t" style="left:4.20px;top:106.00px;font-size:12px;color:#444;font-weight:normal;line-height:14px;transform:scaleX(1.0168);transform-origin:0 0;">Workbook</div>
<div class="t" style="left:13.51px;top:122.00px;font-size:12px;color:#444;font-weight:normal;line-height:14px;transform:scaleX(0.9393);transform-origin:0 0;">Views</div>
<svg style="left:46.5px;top:127.3px" width="6" height="3.5"><path d="M0 0 H5 L2.5 2.5 Z" fill="#6d6d6d"/></svg>
<div style="left:62px;top:70px;width:1px;height:82px;background:#d5d5d5;"></div>
<div style="left:69px;top:70px;width:30px;height:30px;background:#f7f7f7;box-sizing:border-box;border:1px solid #c8c8c8;"></div>
<svg style="left:77px;top:77px" width="17" height="17"><path d="M0.5 3 V11.5 H6" fill="none" stroke="#6d6d6d" stroke-width="1"/><path d="M3.5 0.5 H9.5 V3 L6.5 6 L3.5 3 Z" fill="none" stroke="#6d6d6d" stroke-width="1"/><path d="M11 3.5 H16" stroke="#6d6d6d" stroke-width="1"/><path d="M8 15.5 V12 L12 8.5 L16 12 V15.5 Z" fill="none" stroke="#6d6d6d" stroke-width="1"/><path d="M9.5 8 V9 M15 6 V7 M8 4 V5" stroke="#8a8a8a" stroke-width="1"/></svg>
<div class="t" style="left:69.81px;top:106.00px;font-size:12px;color:#444;font-weight:normal;line-height:14px;transform:scaleX(0.9730);transform-origin:0 0;">Show</div>
<svg style="left:82px;top:127.3px" width="6" height="3.5"><path d="M0 0 H5 L2.5 2.5 Z" fill="#6d6d6d"/></svg>
<div style="left:106px;top:70px;width:1px;height:82px;background:#d5d5d5;"></div>
<svg style="left:117px;top:73px" width="28" height="28"><circle cx="10.8" cy="10.3" r="8.6" fill="none" stroke="#6d6d6d" stroke-width="1.9"/><path d="M18.5 17.5 L25.5 25" stroke="#6d6d6d" stroke-width="3.4" stroke-linecap="round"/></svg>
<div class="t" style="left:115.47px;top:108.00px;font-size:12px;color:#444;font-weight:normal;line-height:14px;transform:scaleX(1.0780);transform-origin:0 0;">Zoom</div>
<svg style="left:160px;top:72px" width="28" height="32"><path d="M1.5 1.5 H12.5 L17.5 6.5 V27 H1.5 Z M12.5 1.5 V6.5 H17.5" fill="#fff" stroke="#6d6d6d" stroke-width="1"/><path d="M17 1.5 H27 M26.5 1 V22 M17 21.5 H27" fill="none" stroke="#6d6d6d" stroke-width="1" stroke-dasharray="1 1"/><path d="M15 15 H24 M20.5 11.5 L24 15 L20.5 18.5" fill="none" stroke="#4a7ebb" stroke-width="1.8"/><rect x="12.5" y="23" width="14.5" height="9" fill="#3a6fb0"/><text x="19.75" y="30.6" font-size="8" font-family="Liberation Sans" font-weight="bold" fill="#fff" text-anchor="middle" letter-spacing="-0.3">100</text></svg>
<div class="t" style="left:158.41px;top:108.00px;font-size:12px;color:#444;font-weight:normal;line-height:14px;transform:scaleX(0.9864);transform-origin:0 0;">100%</div>
<svg style="left:206px;top:74px" width="32" height="29"><path d="M1.5 1.5 H28.5 V19 M1.5 1.5 V25.5 H10" fill="none" stroke="#6d6d6d" stroke-width="1"/><path d="M1.5 5.5 H28.5 M1.5 10.5 H8 M1.5 15.5 H8 M1.5 20.5 H8 M8 1.5 V25 M15 1.5 V5.5 M22 1.5 V5.5" fill="none" stroke="#9a9a9a" stroke-width="1"/><rect x="8.5" y="6" width="7" height="5" fill="#bcd3ec"/><circle cx="15.5" cy="14" r="6.6" fill="#fff" stroke="#6d6d6d" stroke-width="1.8"/><path d="M9.8 14.5 A5.7 5.7 0 0 1 21.2 14.5 Z" fill="#bcd3ec"/><path d="M20.5 19 L28 27" stroke="#6d6d6d" stroke-width="3" stroke-linecap="round"/></svg>
<div class="t" style="left:197.98px;top:108.00px;font-size:12px;color:#444;font-weight:normal;line-height:14px;transform:scaleX(1.0580);transform-origin:0 0;">Zoom to</div>
<div class="t" style="left:196.50px;top:124.00px;font-size:12px;color:#444;font-weight:normal;line-height:14px;transform:scaleX(0.9938);transform-origin:0 0;">Selection</div>
<div class="t" style="left:164.60px;top:144.00px;font-size:11.5px;color:#5f5f5f;font-weight:normal;line-height:12px;transform:scaleX(1.0106);transform-origin:0 0;">Zoom</div>
<div style="left:252px;top:70px;width:1px;height:82px;background:#d5d5d5;"></div>
<svg style="left:259px;top:71px" width="18" height="17"><path d="M6.5 1.5 H15.5 V7.5 H13" fill="none" stroke="#6d6d6d" stroke-width="1"/><rect x="6" y="1" width="10" height="2" fill="#6d6d6d"/><path d="M1.5 5.5 H10.5 M1.5 5.5 V11.5 H7" fill="none" stroke="#6d6d6d" stroke-width="1"/><rect x="1" y="5" width="10" height="2" fill="#6d6d6d"/><rect x="7.5" y="9.5" width="9" height="6" fill="#fff" stroke="#6d6d6d" stroke-width="1"/><rect x="7" y="9" width="10" height="2.5" fill="#3a6fb0"/></svg>
<div class="t" style="left:278.99px;top:75.00px;font-size:12px;color:#444;font-weight:normal;line-height:14px;transform:scaleX(1.0101);transform-origin:0 0;">New Window</div>
<svg style="left:261px;top:95px" width="14" height="15"><rect x="0.5" y="0.5" width="12" height="14" fill="#fff" stroke="#6d6d6d" stroke-width="1"/><rect x="0" y="0" width="13" height="3" fill="#3a6fb0"/><rect x="0" y="7" width="13" height="2" fill="#3a6fb0"/></svg>
<div class="t" style="left:279.40px;top:98.00px;font-size:12px;color:#444;font-weight:normal;line-height:14px;transform:scaleX(1.0069);transform-origin:0 0;">Arrange All</div>
<svg style="left:260px;top:118px" width="17" height="16"><rect x="0.5" y="0.5" width="15" height="12.5" fill="#fff" stroke="#6d6d6d" stroke-width="1"/><path d="M5.5 0.5 V13 M10.5 0.5 V13 M0.5 5 H15.5 M0.5 9 H15.5" stroke="#aaa" stroke-width="1"/><path d="M1.5 4 L4.5 2 M6.5 4 L9.5 2 M11.5 4 L14.5 2 M1.5 8 L4.5 6 M1.5 12 L4.5 10" stroke="#6a9bd4" stroke-width="1"/><rect x="6" y="5.5" width="4" height="3" fill="#3a6fb0"/><path d="M0.5 13.5 V14.5 H12" stroke="#6d6d6d" stroke-width="1" fill="none"/></svg>
<div class="t" style="left:278.70px;top:120.00px;font-size:12px;color:#444;font-weight:normal;line-height:14px;transform:scaleX(0.9031);transform-origin:0 0;">Freeze Panes</div>
<svg style="left:349px;top:125.6px" width="6" height="3.5"><path d="M0 0 H5 L2.5 2.5 Z" fill="#6d6d6d"/></svg>
<svg style="left:364px;top:74px" width="16" height="13"><rect x="0.5" y="0.5" width="14" height="11" fill="#fff" stroke="#6d6d6d" stroke-width="1"/><rect x="0" y="0" width="15" height="3" fill="#3a6fb0"/><path d="M2 6.5 H13" stroke="#3a6fb0" stroke-width="1" stroke-dasharray="1 1"/></svg>
<svg style="left:364px;top:96px" width="17" height="15"><rect x="0" y="3" width="16" height="11" fill="#fff"/><path d="M0 13.5 H16 M0.5 3 V14 M15.5 3 V14" stroke="#444" stroke-width="1" stroke-dasharray="1 1" fill="none"/><rect x="0" y="0" width="16" height="3" fill="#3a6fb0"/></svg>
<svg style="left:364px;top:119px" width="17" height="14"><rect x="0.5" y="0.5" width="15" height="13" fill="#f1f1f1" stroke="#a8a8a8" stroke-width="1"/><rect x="0" y="0" width="16" height="3" fill="#a8a8a8"/></svg>
<div style="left:387px;top:76px;width:1px;height:55px;background:#d5d5d5;"></div>
<svg style="left:395px;top:74px" width="17" height="12"><path d="M0.5 0.5 H5.5 L7.5 2.5 V10.5 H0.5 Z M8.5 0.5 H13.5 L15.5 2.5 V10.5 H8.5 Z" fill="#fff" stroke="#6d6d6d" stroke-width="1.1"/><path d="M5.5 0.5 V2.5 H7.5 M13.5 0.5 V2.5 H15.5" fill="none" stroke="#6d6d6d" stroke-width="1"/></svg>
<svg style="left:395px;top:95px" width="17" height="17"><path d="M0.5 2.5 H4 M0.5 2.5 V11.5 H4" fill="none" stroke="#b0b0b0" stroke-width="1"/><path d="M5.5 2.5 H10 L12.5 5 V11.5 H5.5 Z" fill="#fff" stroke="#b0b0b0" stroke-width="1"/><path d="M7 7 H11 M7 9 H11 M2 5 H3 M2 7.5 H3 M2 9.5 H3" stroke="#c0c0c0" stroke-width="1"/><path d="M14.5 0.5 V15.5 M13 2 L14.5 0.5 L16 2 M13 14 L14.5 15.5 L16 14" fill="none" stroke="#b0b0b0" stroke-width="1"/></svg>
<svg style="left:395px;top:121px" width="17" height="12"><path d="M0.5 0.5 H5.5 L7.5 2.5 V10.5 H0.5 Z M8.5 0.5 H13.5 L15.5 2.5 V10.5 H8.5 Z" fill="#fff" stroke="#b0b0b0" stroke-width="1.1"/><path d="M2 6.5 H6 M4 4.5 V8.5 M10 6.5 H14 M12 4.5 V8.5" stroke="#b0b0b0" stroke-width="1"/></svg>
<div style="left:419px;top:70px;width:1px;height:82px;background:#d5d5d5;"></div>
<svg style="left:438px;top:73px" width="32" height="27"><path d="M1.5 1.5 H14.5 V12 M1.5 1.5 V12.5 H11" fill="none" stroke="#6d6d6d" stroke-width="1"/><rect x="1" y="1" width="14" height="2" fill="#6d6d6d"/><path d="M16.5 1.5 H29.5 V12.5 H27 M16.5 1.5 V9" fill="none" stroke="#6d6d6d" stroke-width="1"/><rect x="16" y="1" width="14" height="2" fill="#6d6d6d"/><path d="M1.5 14.5 H11 M1.5 14.5 V25.5 H14.5 V22" fill="none" stroke="#6d6d6d" stroke-width="1"/><rect x="1" y="14" width="10" height="2" fill="#6d6d6d"/><rect x="12.5" y="10.5" width="13" height="11" fill="#fff" stroke="#6d6d6d" stroke-width="1"/><rect x="12" y="10" width="14" height="2.5" fill="#3a6fb0"/></svg>
<div class="t" style="left:435.18px;top:108.00px;font-size:12px;color:#444;font-weight:normal;line-height:14px;transform:scaleX(1.0323);transform-origin:0 0;">Switch</div>
<div class="t" style="left:425.40px;top:124.00px;font-size:12px;color:#444;font-weight:normal;line-height:14px;transform:scaleX(1.0021);transform-origin:0 0;">Windows</div>
<svg style="left:477.29999999999995px;top:130px" width="6" height="3.5"><path d="M0 0 H5 L2.5 2.5 Z" fill="#6d6d6d"/></svg>
<div class="t" style="left:349.09px;top:144.00px;font-size:11.5px;color:#5f5f5f;font-weight:normal;line-height:12px;transform:scaleX(1.0686);transform-origin:0 0;">Window</div>
<div style="left:489px;top:70px;width:1px;height:84px;background:#d5d5d5;"></div>
<svg style="left:501px;top:74px" width="32" height="30"><rect x="0.5" y="0.5" width="25" height="22.5" fill="#fff" stroke="#6d6d6d" stroke-width="1"/><rect x="0" y="0" width="26" height="5" fill="#6d6d6d"/><path d="M3 8.5 H8 M10 8.5 H15 M17 8.5 H22 M3 12.5 H8 M10 12.5 H15 M17 12.5 H22 M3 16.5 H8 M10 16.5 H15 M3 20.5 H8 M10 20.5 H15" stroke="#9a9a9a" stroke-width="1"/><path d="M18.5 16 Q18.5 14.5 20 14.5 H29 Q30.5 14.5 30.5 16 Q30.5 17.5 29 17.5 V26 Q29 28.5 26.5 28.5 H17.5 Q16 28.5 16 27 Q16 25.5 17.5 25.5 H18.5 Z" fill="#fff" stroke="#e8873a" stroke-width="2"/></svg>
<div class="t" style="left:495.79px;top:108.00px;font-size:12px;color:#444;font-weight:normal;line-height:14px;transform:scaleX(1.0106);transform-origin:0 0;">Macros</div>
<svg style="left:513px;top:129.5px" width="6" height="3.5"><path d="M0 0 H5 L2.5 2.5 Z" fill="#6d6d6d"/></svg>
<div class="t" style="left:496.51px;top:144.00px;font-size:11.5px;color:#5f5f5f;font-weight:normal;line-height:12px;transform:scaleX(0.9890);transform-origin:0 0;">Macros</div>
<div style="left:542px;top:70px;width:1px;height:84px;background:#d5d5d5;"></div>
<svg style="left:620px;top:146px" width="10" height="7"><path d="M1 6 L5 2 L9 6" fill="none" stroke="#555" stroke-width="1.5"/></svg>
<div style="left:0px;top:159px;width:642px;height:66px;background:#e6e6e6;"></div>
<div style="left:6px;top:169px;width:350px;height:26px;background:#fff;box-sizing:border-box;border:1px solid #c6c6c6;"></div>
<div class="t" style="left:13.30px;top:175.00px;font-size:13px;color:#333;font-weight:normal;line-height:15px;transform:scaleX(1.0261);transform-origin:0 0;">A1</div>
<svg style="left:342px;top:178.4px" width="8" height="5"><path d="M0 0 H7 L3.5 4 Z" fill="#666"/></svg>
<div style="left:370px;top:177px;width:2px;height:2px;background:#a6a6a6;"></div>
<div style="left:370px;top:181.5px;width:2px;height:2px;background:#a6a6a6;"></div>
<div style="left:370px;top:186px;width:2px;height:2px;background:#a6a6a6;"></div>
<div style="left:386px;top:169px;width:110px;height:26px;background:#fff;box-sizing:border-box;border:1px solid #c6c6c6;"></div>
<svg style="left:399px;top:177px" width="12" height="11"><path d="M0.8 0.8 L10.5 10 M10.5 0.8 L0.8 10" stroke="#b8b8b8" stroke-width="1.4"/></svg>
<svg style="left:434px;top:177px" width="15" height="11"><path d="M0.8 5.5 L5 9.6 L13.5 0.8" fill="none" stroke="#c8c8c8" stroke-width="1.8"/></svg>
<div class="t" style="left:472.50px;top:175.00px;font-size:13px;color:#555;font-weight:normal;line-height:15px;font-family:Liberation Serif,serif;font-style:italic;font-weight:bold;">f</div>
<div class="t" style="left:477.50px;top:178.00px;font-size:10px;color:#555;font-weight:normal;line-height:11px;font-family:Liberation Serif,serif;font-style:italic;font-weight:bold;">x</div>
<div style="left:499px;top:169px;width:135px;height:26px;background:#fff;box-sizing:border-box;border:1px solid #c6c6c6;"></div>
<div class="t" style="left:510.02px;top:175.00px;font-size:12.8px;color:#222;font-weight:normal;line-height:15px;transform:scaleX(0.9761);transform-origin:0 0;">USA,US</div>
<svg style="left:621px;top:178px" width="9" height="6"><path d="M0.8 0.8 L4.2 4.2 L7.6 0.8" fill="none" stroke="#555" stroke-width="1.5"/></svg>
<div style="left:1px;top:205px;width:642px;height:19px;background:#e6e6e6;"></div>
<svg style="left:12px;top:209px" width="12" height="12"><path d="M11 0 L11 12 L0 12 Z" fill="#b8b8b8"/></svg>
<div style="left:1px;top:225px;width:25px;height:668px;background:#e6e6e6;"></div>
<div style="left:27px;top:225px;width:590px;height:668px;background:#fff;"></div>
<div style="left:27px;top:205px;width:72px;height:19px;background:#d2d2d2;"></div>
<div style="left:1px;top:225px;width:25px;height:19px;background:#d2d2d2;"></div>
<div style="left:1px;top:224px;width:616px;height:1px;background:#ababab;"></div>
<div style="left:26px;top:205px;width:1px;height:688px;background:#ababab;"></div>
<div style="left:1px;top:244px;width:25px;height:1px;background:#c6c6c6;"></div>
<div style="left:27px;top:244px;width:590px;height:1px;background:#d4d4d4;"></div>
<div class="t" style="left:-1.50px;top:229.00px;font-size:12.6px;color:#217346;font-weight:normal;line-height:14px;width:30px;text-align:center;">1</div>
<div class="t" style="left:28.86px;top:228.00px;font-size:13px;color:#000;font-weight:normal;line-height:15px;transform:scaleX(0.9402);transform-origin:0 0;">USA,US</div>
<div style="left:1px;top:264px;width:25px;height:1px;background:#c6c6c6;"></div>
<div style="left:27px;top:264px;width:590px;height:1px;background:#d4d4d4;"></div>
<div class="t" style="left:-1.50px;top:249.00px;font-size:12.6px;color:#222;font-weight:normal;line-height:14px;width:30px;text-align:center;">2</div>
<div class="t" style="left:28.86px;top:248.00px;font-size:13px;color:#000;font-weight:normal;line-height:15px;transform:scaleX(0.9402);transform-origin:0 0;">USA,US</div>
<div style="left:1px;top:284px;width:25px;height:1px;background:#c6c6c6;"></div>
<div style="left:27px;top:284px;width:590px;height:1px;background:#d4d4d4;"></div>
<div class="t" style="left:-1.50px;top:269.00px;font-size:12.6px;color:#222;font-weight:normal;line-height:14px;width:30px;text-align:center;">3</div>
<div class="t" style="left:28.86px;top:268.00px;font-size:13px;color:#000;font-weight:normal;line-height:15px;transform:scaleX(0.9402);transform-origin:0 0;">USA,US</div>
<div style="left:1px;top:304px;width:25px;height:1px;background:#c6c6c6;"></div>
<div style="left:27px;top:304px;width:590px;height:1px;background:#d4d4d4;"></div>
<div class="t" style="left:-1.50px;top:289.00px;font-size:12.6px;color:#222;font-weight:normal;line-height:14px;width:30px;text-align:center;">4</div>
<div class="t" style="left:28.86px;top:288.00px;font-size:13px;color:#000;font-weight:normal;line-height:15px;transform:scaleX(0.9402);transform-origin:0 0;">USA,US</div>
<div style="left:1px;top:324px;width:25px;height:1px;background:#c6c6c6;"></div>
<div style="left:27px;top:324px;width:590px;height:1px;background:#d4d4d4;"></div>
<div class="t" style="left:-1.50px;top:309.00px;font-size:12.6px;color:#222;font-weight:normal;line-height:14px;width:30px;text-align:center;">5</div>
<div class="t" style="left:28.86px;top:308.00px;font-size:13px;color:#000;font-weight:normal;line-height:15px;transform:scaleX(0.9402);transform-origin:0 0;">USA,US</div>
<div style="left:1px;top:344px;width:25px;height:1px;background:#c6c6c6;"></div>
<div style="left:27px;top:344px;width:590px;height:1px;background:#d4d4d4;"></div>
<div class="t" style="left:-1.50px;top:329.00px;font-size:12.6px;color:#222;font-weight:normal;line-height:14px;width:30px;text-align:center;">6</div>
<div class="t" style="left:28.86px;top:328.00px;font-size:13px;color:#000;font-weight:normal;line-height:15px;transform:scaleX(0.9402);transform-origin:0 0;">USA,US</div>
<div style="left:1px;top:364px;width:25px;height:1px;background:#c6c6c6;"></div>
<div style="left:27px;top:364px;width:590px;height:1px;background:#d4d4d4;"></div>
<div class="t" style="left:-1.50px;top:349.00px;font-size:12.6px;color:#222;font-weight:normal;line-height:14px;width:30px;text-align:center;">7</div>
<div class="t" style="left:28.86px;top:348.00px;font-size:13px;color:#000;font-weight:normal;line-height:15px;transform:scaleX(0.9402);transform-origin:0 0;">USA,US</div>
<div style="left:1px;top:384px;width:25px;height:1px;background:#c6c6c6;"></div>
<div style="left:27px;top:384px;width:590px;height:1px;background:#d4d4d4;"></div>
<div class="t" style="left:-1.50px;top:369.00px;font-size:12.6px;color:#222;font-weight:normal;line-height:14px;width:30px;text-align:center;">8</div>
<div class="t" style="left:28.86px;top:368.00px;font-size:13px;color:#000;font-weight:normal;line-height:15px;transform:scaleX(0.9402);transform-origin:0 0;">USA,US</div>
<div style="left:1px;top:404px;width:25px;height:1px;background:#c6c6c6;"></div>
<div style="left:27px;top:404px;width:590px;height:1px;background:#d4d4d4;"></div>
<div class="t" style="left:-1.50px;top:389.00px;font-size:12.6px;color:#222;font-weight:normal;line-height:14px;width:30px;text-align:center;">9</div>
<div class="t" style="left:28.69px;top:388.00px;font-size:13px;color:#000;font-weight:normal;line-height:15px;transform:scaleX(1.0095);transform-origin:0 0;">Brazil,BR</div>
<div style="left:1px;top:424px;width:25px;height:1px;background:#c6c6c6;"></div>
<div style="left:27px;top:424px;width:590px;height:1px;background:#d4d4d4;"></div>
<div class="t" style="left:-1.50px;top:409.00px;font-size:12.6px;color:#222;font-weight:normal;line-height:14px;width:30px;text-align:center;">10</div>
<div class="t" style="left:28.69px;top:408.00px;font-size:13px;color:#000;font-weight:normal;line-height:15px;transform:scaleX(1.0095);transform-origin:0 0;">Brazil,BR</div>
<div style="left:1px;top:444px;width:25px;height:1px;background:#c6c6c6;"></div>
<div style="left:27px;top:444px;width:590px;height:1px;background:#d4d4d4;"></div>
<div class="t" style="left:-1.50px;top:429.00px;font-size:12.6px;color:#222;font-weight:normal;line-height:14px;width:30px;text-align:center;">11</div>
<div class="t" style="left:28.69px;top:428.00px;font-size:13px;color:#000;font-weight:normal;line-height:15px;transform:scaleX(1.0095);transform-origin:0 0;">Brazil,BR</div>
<div style="left:1px;top:464px;width:25px;height:1px;background:#c6c6c6;"></div>
<div style="left:27px;top:464px;width:590px;height:1px;background:#d4d4d4;"></div>
<div class="t" style="left:-1.50px;top:449.00px;font-size:12.6px;color:#222;font-weight:normal;line-height:14px;width:30px;text-align:center;">12</div>
<div class="t" style="left:28.69px;top:448.00px;font-size:13px;color:#000;font-weight:normal;line-height:15px;transform:scaleX(1.0095);transform-origin:0 0;">Brazil,BR</div>
<div style="left:1px;top:484px;width:25px;height:1px;background:#c6c6c6;"></div>
<div style="left:27px;top:484px;width:590px;height:1px;background:#d4d4d4;"></div>
<div class="t" style="left:-1.50px;top:469.00px;font-size:12.6px;color:#222;font-weight:normal;line-height:14px;width:30px;text-align:center;">13</div>
<div class="t" style="left:28.69px;top:468.00px;font-size:13px;color:#000;font-weight:normal;line-height:15px;transform:scaleX(1.0095);transform-origin:0 0;">Brazil,BR</div>
<div style="left:1px;top:504px;width:25px;height:1px;background:#c6c6c6;"></div>
<div style="left:27px;top:504px;width:590px;height:1px;background:#d4d4d4;"></div>
<div class="t" style="left:-1.50px;top:489.00px;font-size:12.6px;color:#222;font-weight:normal;line-height:14px;width:30px;text-align:center;">14</div>
<div class="t" style="left:28.69px;top:488.00px;font-size:13px;color:#000;font-weight:normal;line-height:15px;transform:scaleX(1.0095);transform-origin:0 0;">Brazil,BR</div>
<div style="left:1px;top:524px;width:25px;height:1px;background:#c6c6c6;"></div>
<div style="left:27px;top:524px;width:590px;height:1px;background:#d4d4d4;"></div>
<div class="t" style="left:-1.50px;top:509.00px;font-size:12.6px;color:#222;font-weight:normal;line-height:14px;width:30px;text-align:center;">15</div>
<div class="t" style="left:28.69px;top:508.00px;font-size:13px;color:#000;font-weight:normal;line-height:15px;transform:scaleX(1.0095);transform-origin:0 0;">Brazil,BR</div>
<div style="left:1px;top:544px;width:25px;height:1px;background:#c6c6c6;"></div>
<div style="left:27px;top:544px;width:590px;height:1px;background:#d4d4d4;"></div>
<div class="t" style="left:-1.50px;top:529.00px;font-size:12.6px;color:#222;font-weight:normal;line-height:14px;width:30px;text-align:center;">16</div>
<div class="t" style="left:28.69px;top:528.00px;font-size:13px;color:#000;font-weight:normal;line-height:15px;transform:scaleX(1.0095);transform-origin:0 0;">Brazil,BR</div>
<div style="left:1px;top:564px;width:25px;height:1px;background:#c6c6c6;"></div>
<div style="left:27px;top:564px;width:590px;height:1px;background:#d4d4d4;"></div>
<div class="t" style="left:-1.50px;top:549.00px;font-size:12.6px;color:#222;font-weight:normal;line-height:14px;width:30px;text-align:center;">17</div>
<div class="t" style="left:29.09px;top:548.00px;font-size:13px;color:#000;font-weight:normal;line-height:15px;transform:scaleX(1.0183);transform-origin:0 0;">China,CN</div>
<div style="left:1px;top:584px;width:25px;height:1px;background:#c6c6c6;"></div>
<div style="left:27px;top:584px;width:590px;height:1px;background:#d4d4d4;"></div>
<div class="t" style="left:-1.50px;top:569.00px;font-size:12.6px;color:#222;font-weight:normal;line-height:14px;width:30px;text-align:center;">18</div>
<div class="t" style="left:29.09px;top:568.00px;font-size:13px;color:#000;font-weight:normal;line-height:15px;transform:scaleX(1.0183);transform-origin:0 0;">China,CN</div>
<div style="left:1px;top:604px;width:25px;height:1px;background:#c6c6c6;"></div>
<div style="left:27px;top:604px;width:590px;height:1px;background:#d4d4d4;"></div>
<div class="t" style="left:-1.50px;top:589.00px;font-size:12.6px;color:#222;font-weight:normal;line-height:14px;width:30px;text-align:center;">19</div>
<div class="t" style="left:29.09px;top:588.00px;font-size:13px;color:#000;font-weight:normal;line-height:15px;transform:scaleX(1.0183);transform-origin:0 0;">China,CN</div>
<div style="left:1px;top:624px;width:25px;height:1px;background:#c6c6c6;"></div>
<div style="left:27px;top:624px;width:590px;height:1px;background:#d4d4d4;"></div>
<div class="t" style="left:-1.50px;top:609.00px;font-size:12.6px;color:#222;font-weight:normal;line-height:14px;width:30px;text-align:center;">20</div>
<div class="t" style="left:29.09px;top:608.00px;font-size:13px;color:#000;font-weight:normal;line-height:15px;transform:scaleX(1.0183);transform-origin:0 0;">China,CN</div>
<div style="left:1px;top:644px;width:25px;height:1px;background:#c6c6c6;"></div>
<div style="left:27px;top:644px;width:590px;height:1px;background:#d4d4d4;"></div>
<div class="t" style="left:-1.50px;top:629.00px;font-size:12.6px;color:#222;font-weight:normal;line-height:14px;width:30px;text-align:center;">21</div>
<div class="t" style="left:29.09px;top:628.00px;font-size:13px;color:#000;font-weight:normal;line-height:15px;transform:scaleX(1.0183);transform-origin:0 0;">China,CN</div>
<div style="left:1px;top:664px;width:25px;height:1px;background:#c6c6c6;"></div>
<div style="left:27px;top:664px;width:590px;height:1px;background:#d4d4d4;"></div>
<div class="t" style="left:-1.50px;top:649.00px;font-size:12.6px;color:#222;font-weight:normal;line-height:14px;width:30px;text-align:center;">22</div>
<div class="t" style="left:29.09px;top:648.00px;font-size:13px;color:#000;font-weight:normal;line-height:15px;transform:scaleX(1.0183);transform-origin:0 0;">China,CN</div>
<div style="left:1px;top:684px;width:25px;height:1px;background:#c6c6c6;"></div>
<div style="left:27px;top:684px;width:590px;height:1px;background:#d4d4d4;"></div>
<div class="t" style="left:-1.50px;top:669.00px;font-size:12.6px;color:#222;font-weight:normal;line-height:14px;width:30px;text-align:center;">23</div>
<div class="t" style="left:29.09px;top:668.00px;font-size:13px;color:#000;font-weight:normal;line-height:15px;transform:scaleX(1.0183);transform-origin:0 0;">China,CN</div>
<div style="left:1px;top:704px;width:25px;height:1px;background:#c6c6c6;"></div>
<div style="left:27px;top:704px;width:590px;height:1px;background:#d4d4d4;"></div>
<div class="t" style="left:-1.50px;top:689.00px;font-size:12.6px;color:#222;font-weight:normal;line-height:14px;width:30px;text-align:center;">24</div>
<div class="t" style="left:29.09px;top:688.00px;font-size:13px;color:#000;font-weight:normal;line-height:15px;transform:scaleX(1.0183);transform-origin:0 0;">China,CN</div>
<div style="left:1px;top:724px;width:25px;height:1px;background:#c6c6c6;"></div>
<div style="left:27px;top:724px;width:590px;height:1px;background:#d4d4d4;"></div>
<div class="t" style="left:-1.50px;top:709.00px;font-size:12.6px;color:#222;font-weight:normal;line-height:14px;width:30px;text-align:center;">25</div>
<div class="t" style="left:28.74px;top:708.00px;font-size:13px;color:#000;font-weight:normal;line-height:15px;transform:scaleX(0.9667);transform-origin:0 0;">Russia,RU</div>
<div style="left:1px;top:744px;width:25px;height:1px;background:#c6c6c6;"></div>
<div style="left:27px;top:744px;width:590px;height:1px;background:#d4d4d4;"></div>
<div class="t" style="left:-1.50px;top:729.00px;font-size:12.6px;color:#222;font-weight:normal;line-height:14px;width:30px;text-align:center;">26</div>
<div class="t" style="left:28.74px;top:728.00px;font-size:13px;color:#000;font-weight:normal;line-height:15px;transform:scaleX(0.9667);transform-origin:0 0;">Russia,RU</div>
<div style="left:1px;top:764px;width:25px;height:1px;background:#c6c6c6;"></div>
<div style="left:27px;top:764px;width:590px;height:1px;background:#d4d4d4;"></div>
<div class="t" style="left:-1.50px;top:749.00px;font-size:12.6px;color:#222;font-weight:normal;line-height:14px;width:30px;text-align:center;">27</div>
<div class="t" style="left:28.74px;top:748.00px;font-size:13px;color:#000;font-weight:normal;line-height:15px;transform:scaleX(0.9667);transform-origin:0 0;">Russia,RU</div>
<div style="left:1px;top:784px;width:25px;height:1px;background:#c6c6c6;"></div>
<div style="left:27px;top:784px;width:590px;height:1px;background:#d4d4d4;"></div>
<div class="t" style="left:-1.50px;top:769.00px;font-size:12.6px;color:#222;font-weight:normal;line-height:14px;width:30px;text-align:center;">28</div>
<div class="t" style="left:28.74px;top:768.00px;font-size:13px;color:#000;font-weight:normal;line-height:15px;transform:scaleX(0.9667);transform-origin:0 0;">Russia,RU</div>
<div style="left:1px;top:804px;width:25px;height:1px;background:#c6c6c6;"></div>
<div style="left:27px;top:804px;width:590px;height:1px;background:#d4d4d4;"></div>
<div class="t" style="left:-1.50px;top:789.00px;font-size:12.6px;color:#222;font-weight:normal;line-height:14px;width:30px;text-align:center;">29</div>
<div class="t" style="left:28.74px;top:788.00px;font-size:13px;color:#000;font-weight:normal;line-height:15px;transform:scaleX(0.9667);transform-origin:0 0;">Russia,RU</div>
<div style="left:1px;top:824px;width:25px;height:1px;background:#c6c6c6;"></div>
<div style="left:27px;top:824px;width:590px;height:1px;background:#d4d4d4;"></div>
<div class="t" style="left:-1.50px;top:809.00px;font-size:12.6px;color:#222;font-weight:normal;line-height:14px;width:30px;text-align:center;">30</div>
<div class="t" style="left:28.74px;top:808.00px;font-size:13px;color:#000;font-weight:normal;line-height:15px;transform:scaleX(0.9667);transform-origin:0 0;">Russia,RU</div>
<div style="left:1px;top:844px;width:25px;height:1px;background:#c6c6c6;"></div>
<div style="left:27px;top:844px;width:590px;height:1px;background:#d4d4d4;"></div>
<div class="t" style="left:-1.50px;top:829.00px;font-size:12.6px;color:#222;font-weight:normal;line-height:14px;width:30px;text-align:center;">31</div>
<div class="t" style="left:28.74px;top:828.00px;font-size:13px;color:#000;font-weight:normal;line-height:15px;transform:scaleX(0.9667);transform-origin:0 0;">Russia,RU</div>
<div style="left:1px;top:864px;width:25px;height:1px;background:#c6c6c6;"></div>
<div style="left:27px;top:864px;width:590px;height:1px;background:#d4d4d4;"></div>
<div class="t" style="left:-1.50px;top:849.00px;font-size:12.6px;color:#222;font-weight:normal;line-height:14px;width:30px;text-align:center;">32</div>
<div class="t" style="left:28.74px;top:848.00px;font-size:13px;color:#000;font-weight:normal;line-height:15px;transform:scaleX(0.9667);transform-origin:0 0;">Russia,RU</div>
<div style="left:1px;top:884px;width:25px;height:1px;background:#c6c6c6;"></div>
<div style="left:27px;top:884px;width:590px;height:1px;background:#d4d4d4;"></div>
<div class="t" style="left:-1.50px;top:869.00px;font-size:12.6px;color:#222;font-weight:normal;line-height:14px;width:30px;text-align:center;">33</div>
<div class="t" style="left:29.11px;top:868.00px;font-size:13px;color:#000;font-weight:normal;line-height:15px;transform:scaleX(0.9789);transform-origin:0 0;">Canada,CA</div>
<div class="t" style="left:-1.50px;top:889.00px;font-size:12.6px;color:#222;font-weight:normal;line-height:14px;width:30px;text-align:center;">34</div>
<div class="t" style="left:29.11px;top:888.00px;font-size:13px;color:#000;font-weight:normal;line-height:15px;transform:scaleX(0.9789);transform-origin:0 0;">Canada,CA</div>
<div style="left:99px;top:205px;width:1px;height:19px;background:#bcbcbc;"></div>
<div style="left:99px;top:225px;width:1px;height:668px;background:#d4d4d4;"></div>
<div class="t" style="left:43.00px;top:208.00px;font-size:12.6px;color:#217346;font-weight:normal;line-height:14px;width:40px;text-align:center;">A</div>
<div style="left:163px;top:205px;width:1px;height:19px;background:#bcbcbc;"></div>
<div style="left:163px;top:225px;width:1px;height:668px;background:#d4d4d4;"></div>
<div class="t" style="left:111.50px;top:208.00px;font-size:12.6px;color:#222;font-weight:normal;line-height:14px;width:40px;text-align:center;">B</div>
<div style="left:227px;top:205px;width:1px;height:19px;background:#bcbcbc;"></div>
<div style="left:227px;top:225px;width:1px;height:668px;background:#d4d4d4;"></div>
<div class="t" style="left:175.50px;top:208.00px;font-size:12.6px;color:#222;font-weight:normal;line-height:14px;width:40px;text-align:center;">C</div>
<div style="left:291px;top:205px;width:1px;height:19px;background:#bcbcbc;"></div>
<div style="left:291px;top:225px;width:1px;height:668px;background:#d4d4d4;"></div>
<div class="t" style="left:239.50px;top:208.00px;font-size:12.6px;color:#222;font-weight:normal;line-height:14px;width:40px;text-align:center;">D</div>
<div style="left:355px;top:205px;width:1px;height:19px;background:#bcbcbc;"></div>
<div style="left:355px;top:225px;width:1px;height:668px;background:#d4d4d4;"></div>
<div class="t" style="left:303.50px;top:208.00px;font-size:12.6px;color:#222;font-weight:normal;line-height:14px;width:40px;text-align:center;">E</div>
<div style="left:419px;top:205px;width:1px;height:19px;background:#bcbcbc;"></div>
<div style="left:419px;top:225px;width:1px;height:668px;background:#d4d4d4;"></div>
<div class="t" style="left:367.50px;top:208.00px;font-size:12.6px;color:#222;font-weight:normal;line-height:14px;width:40px;text-align:center;">F</div>
<div style="left:483px;top:205px;width:1px;height:19px;background:#bcbcbc;"></div>
<div style="left:483px;top:225px;width:1px;height:668px;background:#d4d4d4;"></div>
<div class="t" style="left:431.50px;top:208.00px;font-size:12.6px;color:#222;font-weight:normal;line-height:14px;width:40px;text-align:center;">G</div>
<div style="left:547px;top:205px;width:1px;height:19px;background:#bcbcbc;"></div>
<div style="left:547px;top:225px;width:1px;height:668px;background:#d4d4d4;"></div>
<div class="t" style="left:495.50px;top:208.00px;font-size:12.6px;color:#222;font-weight:normal;line-height:14px;width:40px;text-align:center;">H</div>
<div style="left:611px;top:205px;width:1px;height:19px;background:#bcbcbc;"></div>
<div style="left:611px;top:225px;width:1px;height:668px;background:#d4d4d4;"></div>
<div class="t" style="left:559.50px;top:208.00px;font-size:12.6px;color:#222;font-weight:normal;line-height:14px;width:40px;text-align:center;">I</div>
<div style="left:0px;top:893px;width:700px;height:28px;background:#e6e6e6;"></div>
<div style="left:0px;top:893px;width:700px;height:1px;background:#bdbdbd;"></div>
<div style="left:0px;top:921px;width:700px;height:1px;background:#c8c8c8;"></div>
<div style="left:0px;top:922px;width:700px;height:20px;background:#f1f1f1;"></div>
<svg style="left:28px;top:902px" width="6" height="9"><path d="M5 0.5 V8.5 L0.8 4.5 Z" fill="#c2c2c2"/></svg>
<svg style="left:55px;top:902px" width="6" height="9"><path d="M0.8 0.5 V8.5 L5 4.5 Z" fill="#c2c2c2"/></svg>
<div style="left:101px;top:893px;width:65px;height:25px;background:#fff;box-sizing:border-box;border-left:1px solid #b4b4b4;border-right:1px solid #a6a6a6;"></div>
<div style="left:101px;top:916px;width:65px;height:2px;background:#217346;"></div>
<div class="t" style="left:112.59px;top:900.00px;font-size:12.5px;color:#217346;font-weight:bold;line-height:14px;transform:scaleX(1.0199);transform-origin:0 0;">Sheet1</div>
<svg style="left:198px;top:898px" width="18" height="18"><circle cx="9" cy="9" r="7.8" fill="none" stroke="#8a8a8a" stroke-width="1.2"/><path d="M9 4.8 V13.2 M4.8 9 H13.2" stroke="#6d6d6d" stroke-width="1.8"/></svg>
<div class="t" style="left:7.60px;top:925.00px;font-size:12px;color:#444;font-weight:normal;line-height:14px;transform:scaleX(0.8991);transform-origin:0 0;">Ready</div>
<svg style="left:59px;top:924px" width="15" height="15"><circle cx="3.5" cy="3.5" r="3" fill="#6d6d6d"/><path d="M7 2.5 H13.5 V13.5 H2.5 V7.5" fill="none" stroke="#6d6d6d" stroke-width="1"/><rect x="7" y="2" width="7" height="2.2" fill="#6d6d6d"/><path d="M4.5 8.5 H6 M7.5 8.5 H9 M10.5 8.5 H12 M4.5 10.5 H6 M7.5 10.5 H9 M10.5 10.5 H12 M4.5 12.5 H6 M7.5 12.5 H9 M10.5 12.5 H12" stroke="#6d6d6d" stroke-width="1"/></svg>
<div style="left:617px;top:205px;width:22px;height:688px;background:#e6e6e6;"></div>
<div style="left:617px;top:224px;width:1px;height:670px;background:#ababab;"></div>
<div style="left:27px;top:893px;width:591px;height:1px;background:#ababab;"></div>
<div style="left:621px;top:207px;width:15px;height:15px;background:#fff;box-sizing:border-box;border:1px solid #ababab;"></div>
<svg style="left:624px;top:211px" width="10" height="6"><path d="M0.5 5 H8.5 L4.5 0.8 Z" fill="#6d6d6d"/></svg>
<div style="left:621px;top:222px;width:15px;height:657px;background:#dadada;"></div>
<div style="left:621px;top:222px;width:15px;height:542px;background:#fff;box-sizing:border-box;border:1px solid #ababab;"></div>
<div style="left:621px;top:879px;width:15px;height:15px;background:#fff;box-sizing:border-box;border:1px solid #ababab;"></div>
<svg style="left:624px;top:884px" width="10" height="6"><path d="M0.5 0.5 H8.5 L4.5 4.7 Z" fill="#6d6d6d"/></svg>
<div style="left:384px;top:902.5px;width:2px;height:2px;background:#b0b0b0;"></div>
<div style="left:384px;top:906.5px;width:2px;height:2px;background:#b0b0b0;"></div>
<div style="left:384px;top:910.5px;width:2px;height:2px;background:#b0b0b0;"></div>
<div style="left:401px;top:900px;width:203px;height:15px;background:#dadada;"></div>
<div style="left:401px;top:900px;width:15px;height:15px;background:#fff;box-sizing:border-box;border:1px solid #ababab;"></div>
<svg style="left:405px;top:903px" width="6" height="9"><path d="M5 0.5 V8.5 L0.8 4.5 Z" fill="#6d6d6d"/></svg>
<div style="left:415px;top:900px;width:167px;height:15px;background:#fff;box-sizing:border-box;border:1px solid #ababab;"></div>
<div style="left:605px;top:900px;width:15px;height:15px;background:#fff;box-sizing:border-box;border:1px solid #ababab;"></div>
<svg style="left:610px;top:903px" width="6" height="9"><path d="M0.8 0.5 V8.5 L5 4.5 Z" fill="#6d6d6d"/></svg>
<div style="left:336px;top:922px;width:38px;height:20px;background:#c6c6c6;"></div>
<svg style="left:348px;top:925px" width="14" height="14"><path d="M0.5 0 V13 M4.5 0 V13 M8.5 0 V13 M12.5 0 V13 M0 0.5 H13 M0 4.5 H13 M0 8.5 H13 M0 12.5 H13" stroke="#6d6d6d" stroke-width="1" fill="none"/></svg>
<svg style="left:386px;top:925px" width="15" height="14"><path d="M0.5 0.5 H13.5 V12.5 H0.5 Z M3.5 2.5 H10.5 V10.5 H3.5 Z M5 4.5 H9 M5 6.5 H9 M5 8.5 H9" stroke="#6d6d6d" stroke-width="1" fill="none"/></svg>
<svg style="left:424px;top:925px" width="15" height="14"><path d="M0.5 0.5 H13.5 V12.5 H0.5 Z M4.5 0.5 V7.5 H13.5 M8.5 0.5 V7.5" stroke="#6d6d6d" stroke-width="1" fill="none"/></svg>
<div style="left:455px;top:931px;width:6px;height:2px;background:#555;"></div>
<div style="left:465px;top:931.5px;width:100px;height:1px;background:#a6a6a6;"></div>
<div style="left:513px;top:926px;width:4px;height:12px;background:#6d6d6d;"></div>
<div style="left:569px;top:931px;width:8px;height:2px;background:#555;"></div>
<div style="left:572px;top:928px;width:2px;height:8px;background:#555;"></div>
<div class="t" style="left:591.76px;top:924.00px;font-size:12px;color:#444;font-weight:normal;line-height:14px;transform:scaleX(0.9388);transform-origin:0 0;">100%</div>
<div style="left:25px;top:223px;width:76px;height:2px;background:#217346;"></div>
<div style="left:25px;top:223px;width:2px;height:23px;background:#217346;"></div>
<div style="left:99px;top:223px;width:2px;height:18px;background:#217346;"></div>
<div style="left:25px;top:244px;width:71px;height:2px;background:#217346;"></div>
<div style="left:97px;top:242px;width:5px;height:5px;background:#217346;box-shadow:0 0 0 1px #fff;"></div>
<div style="left:0px;top:0px;width:1px;height:942px;background:#217346;"></div>
<div style="left:639px;top:0px;width:1px;height:942px;background:#217346;"></div>
<div style="left:640px;top:0px;width:2px;height:942px;background:#b4b4b4;"></div>
<div style="left:640px;top:0px;width:2px;height:27px;background:#7f8ca3;"></div>
<div style="left:640px;top:27px;width:2px;height:1px;background:#444;"></div>
<div style="left:640px;top:28px;width:2px;height:20px;background:#c4c4c4;"></div>
<div style="left:640px;top:48px;width:2px;height:8px;background:#8391a8;"></div>
<div style="left:640px;top:56px;width:2px;height:1px;background:#444;"></div>
<div style="left:640px;top:874px;width:2px;height:14px;background:#7a7a7a;"></div>
</div>
<div style="left:364px;top:588px;width:447px;height:29px;background:#fff;"></div>
<div class="t" style="left:364.66px;top:592.00px;font-size:18.6px;color:#ea1c24;font-weight:bold;line-height:21px;transform:scaleX(0.9505);transform-origin:0 0;">Data is sorted by Aspose.Cells with Custom Sort List</div>
<svg style="left:0;top:0" width="870" height="942"><rect x="2" y="384.5" width="409.5" height="161.5" rx="13" ry="13" fill="none" stroke="#ea1c24" stroke-width="4.9"/><path d="M412 458 L576 593" stroke="#ea1c24" stroke-width="4.9" stroke-linecap="round"/></svg>
</body></html>
